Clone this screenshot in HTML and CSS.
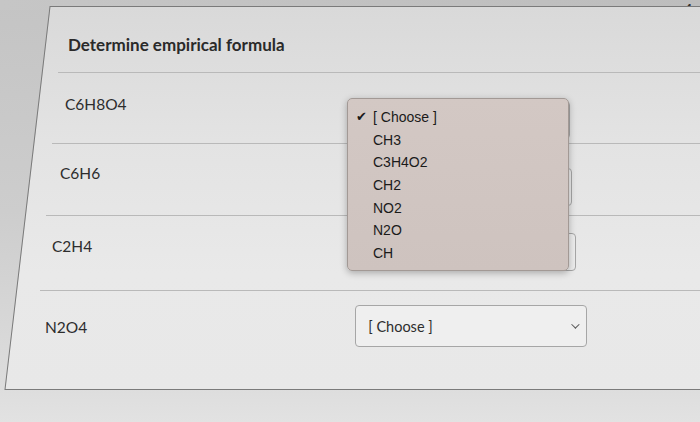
FILE: index.html
```html
<!DOCTYPE html>
<html>
<head>
<meta charset="utf-8">
<link rel="stylesheet" href="styles.css">
</head>
<body>
<div class="page">
  <div class="topstrip"><span class="pts">4</span></div>
  <div class="card">
    <div class="card-header">
      <h2 class="title">Determine empirical formula</h2>
    </div>
    <div class="row row1">
      <div class="label">C6H8O4</div>
      <div class="select covered sel1"><span class="val">[ Choose ]</span><span class="chev"></span></div>
    </div>
    <div class="row row2">
      <div class="label">C6H6</div>
      <div class="select covered sel2"><span class="val">[ Choose ]</span><span class="chev"></span></div>
    </div>
    <div class="row row3">
      <div class="label">C2H4</div>
      <div class="select covered sel3"><span class="val">[ Choose ]</span><span class="chev"></span></div>
    </div>
    <div class="row row4">
      <div class="label">N2O4</div>
      <div class="select sel4"><span class="val">[ Choose ]</span><span class="chev"></span></div>
    </div>
    <ul class="menu">
      <li class="opt checked"><span class="tick">✔</span>[ Choose ]</li>
      <li class="opt">CH3</li>
      <li class="opt">C3H4O2</li>
      <li class="opt">CH2</li>
      <li class="opt">NO2</li>
      <li class="opt">N2O</li>
      <li class="opt">CH</li>
    </ul>
  </div>
</div>
</body>
</html>
```

FILE: styles.css
```css
* { box-sizing: border-box; }
html, body { margin: 0; padding: 0; }
body {
  width: 700px;
  height: 422px;
  overflow: hidden;
  background: linear-gradient(180deg, #c4c4c4 0%, #cdcdcd 50%, #dcdcdc 90%, #e2e2e2 100%);
  font-family: Lato, "Open Sans", sans-serif;
  color: #2d2d2d;
}
.page { position: relative; width: 700px; height: 422px; overflow: hidden; }
.topstrip {
  position: absolute;
  left: 0; top: 0; width: 700px; height: 10px;
  background: linear-gradient(90deg, #c6c6c6, #bdbdbd);
}
.pts {
  position: absolute;
  right: 8px; top: 1px;
  font-size: 13px; font-weight: 700; color: #333;
}
.card {
  position: relative;
  z-index: 0;
  margin: 6px 0 0 0;
  height: 384px;
  overflow: hidden;
}
.card::before {
  content: "";
  position: absolute;
  z-index: -1;
  left: 27px; right: -40px; top: 0; bottom: 0;
  border: 1.5px solid #7a7a7a;
  transform: skewX(-6.7deg);
  background: linear-gradient(180deg, #d9d9d9 0%, #e3e3e3 35%, #e9e9e9 70%, #e8e8e8 100%);
}
.card-header {
  height: 66px;
  padding: 29px 0 0 6px;
  margin-left: 62px;
}
.title {
  margin: 0;
  font-size: 17px;
  font-weight: 700;
  line-height: 20px;
  color: #2a2a2a;
}
.row {
  display: flex;
  align-items: flex-start;
  border-top: 1.5px solid #b9b9b9;
}
.label {
  font-size: 15.5px;
  line-height: 18px;
  color: #2d2d2d;
}
.select {
  display: flex;
  align-items: center;
  justify-content: space-between;
  width: 220px;
  height: 38px;
  padding: 0 9px 0 12px;
  border: 1.5px solid #a6a6a6;
  border-radius: 4px;
  background: #ececec;
  font-size: 14.5px;
  color: #2d2d2d;
}
.covered .val { visibility: hidden; }
.chev {
  width: 6px; height: 6px;
  border-right: 1.5px solid #555;
  border-bottom: 1.5px solid #555;
  transform: rotate(45deg) translateY(-2px);
}
.row1 { height: 71px; margin-left: 58px; padding: 22px 0 0 7px; }
.row1 .select { margin: 6px 0 0 223px; }
.row2 { height: 72px; margin-left: 52px; padding: 20px 0 0 8px; }
.row2 .select { margin: 4px 0 0 252px; }
.row3 { height: 75px; margin-left: 46px; padding: 21px 0 0 6px; }
.row3 .select { margin: -4px 0 0 264px; }
.row4 { height: 98px; margin-left: 40px; padding: 14px 0 0 5px; }
.row4 .label { margin-top: 13px; }
.row4 .select { margin: 0 0 0 268px; height: 42px; width: 232px; background: #efefef; }
.menu {
  position: absolute;
  left: 347px; top: 92px;
  width: 222px; height: 173px;
  margin: 0;
  padding: 7px 0 0 0;
  list-style: none;
  background: linear-gradient(180deg, #d3c8c4 0%, #cec3bf 100%);
  border: 1px solid #a29995;
  border-radius: 5px;
  box-shadow: 0 2px 7px rgba(0,0,0,0.28);
  font-family: "Liberation Sans", Arial, sans-serif;
  font-size: 14px;
  color: #1a1a1a;
}
.opt {
  height: 22.7px;
  line-height: 22.7px;
  padding-left: 25px;
  position: relative;
}
.tick {
  position: absolute;
  left: 8px;
  top: 0;
  font-family: "DejaVu Sans", sans-serif;
  font-size: 13px;
  font-weight: 700;
}
```
